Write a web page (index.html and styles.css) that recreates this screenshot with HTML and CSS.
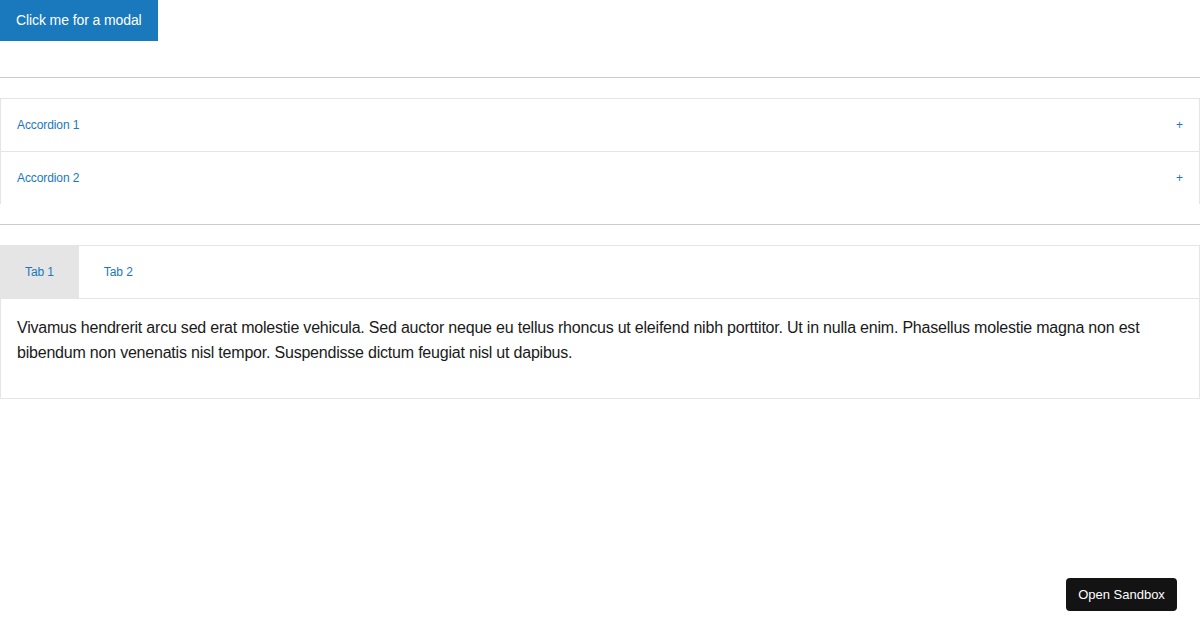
FILE: index.html
```html
<!DOCTYPE html>
<html>
<head>
<meta charset="utf-8">
<link rel="stylesheet" href="styles.css">
</head>
<body>
<div class="top">
  <button class="modal-btn">Click me for a modal</button>
</div>
<hr class="sep">
<div class="accordion">
  <div class="acc-item"><span>Accordion 1</span><span class="plus">+</span></div>
  <div class="acc-item"><span>Accordion 2</span><span class="plus">+</span></div>
</div>
<hr class="sep">
<div class="tabs">
  <div class="tab-bar">
    <div class="tab active">Tab 1</div>
    <div class="tab">Tab 2</div>
  </div>
  <div class="tab-panel">
    <p>Vivamus hendrerit arcu sed erat molestie vehicula. Sed auctor neque eu tellus rhoncus ut eleifend nibh porttitor. Ut in nulla enim. Phasellus molestie magna non est bibendum non venenatis nisl tempor. Suspendisse dictum feugiat nisl ut dapibus.</p>
  </div>
</div>
<button class="sandbox">Open Sandbox</button>
</body>
</html>
```
FILE: styles.css
```css
html, body {
  margin: 0;
  padding: 0;
  background: #fff;
  font-family: "Liberation Sans", Arial, sans-serif;
  color: #1a1a1a;
}
.top {
  height: 41px;
}
.modal-btn {
  height: 41px;
  margin: 0;
  padding: 0 16px;
  border: 0;
  background: #1a78bc;
  color: #fff;
  font-family: "Liberation Sans", Arial, sans-serif;
  font-size: 14px;
  letter-spacing: -0.1px;
  line-height: 41px;
}
.sep {
  margin: 36px 0 20px;
  border: 0;
  border-top: 1px solid #cccccc;
  height: 0;
}
.accordion + .sep {
  margin-top: 20px;
}
.acc-item {
  display: flex;
  justify-content: space-between;
  align-items: center;
  height: 52px;
  padding: 0 16px;
  border: 1px solid #e5e5e5;
  border-bottom: 0;
  color: #1a78bc;
  font-size: 12px;
  letter-spacing: -0.1px;
}
.plus {
  font-size: 12px;
}
.tab-bar {
  display: flex;
  height: 52px;
  border: 1px solid #e5e5e5;
}
.tab {
  padding: 0 25px;
  display: flex;
  align-items: center;
  font-size: 12px;
  letter-spacing: -0.1px;
  color: #1a78bc;
}
.tab.active {
  background: #e5e5e5;
  margin: -1px 0 -1px -1px;
}
.tab-panel {
  border: 1px solid #e5e5e5;
  border-top: 0;
  padding: 16px 16px 1px;
}
.tab-panel p {
  margin: 0 0 32px;
  font-size: 16px;
  line-height: 25px;
  letter-spacing: -0.21px;
}
.sandbox {
  position: fixed;
  right: 23px;
  bottom: 19px;
  width: 111px;
  height: 33px;
  border: 0;
  border-radius: 4px;
  background: #131313;
  color: #fff;
  font-family: "Liberation Sans", Arial, sans-serif;
  font-size: 13px;
  padding: 0;
}
```
